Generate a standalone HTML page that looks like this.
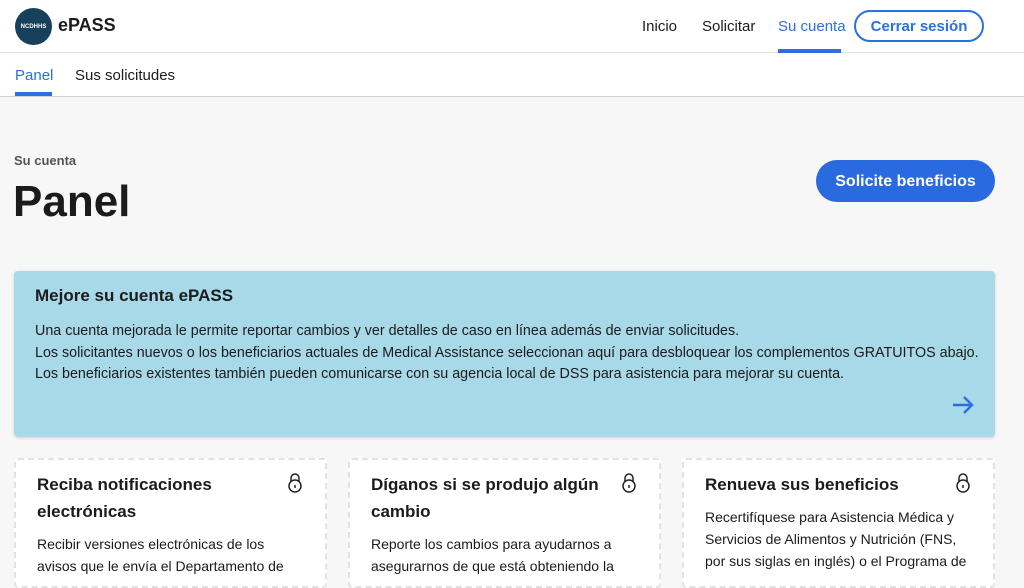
<!DOCTYPE html>
<html><head><meta charset="utf-8"><style>
*{margin:0;padding:0;box-sizing:border-box}
body{width:1024px;height:567px;overflow:hidden;background:#f7f7f7;font-family:"Liberation Sans",sans-serif;color:#1b1b1b;position:relative}
.hdr{position:absolute;left:0;top:0;width:1024px;height:53px;background:#fff;border-bottom:1px solid #dfe1e2}
.logo{position:absolute;left:15px;top:8px;width:37px;height:37px;border-radius:50%;background:#17405a;color:#fff;font-size:6px;font-weight:bold;display:flex;align-items:center;justify-content:center}
.brand{position:absolute;left:58px;top:15px;font-size:18px;font-weight:bold}
.nav{position:absolute;top:18px;font-size:15px;color:#1b1b1b}
.btn{position:absolute;left:854px;top:10px;width:130px;height:32px;border:2px solid #2b6fe0;border-radius:16px;color:#2b6fe0;font-weight:bold;font-size:15px;text-align:center;line-height:29px}
.sub{position:absolute;left:0;top:53px;width:1024px;height:44px;background:#fff;border-bottom:1px solid #cfd2d4}
.tab{position:absolute;top:14px;font-size:15px}
.b2{position:absolute;left:816px;top:160px;width:179px;height:42px;border-radius:21px;background:#2a6ae0;color:#fff;font-weight:bold;font-size:16px;text-align:center;line-height:44px}
.ban{position:absolute;left:14px;top:271px;width:981px;height:166px;background:#a8d9e8;border-radius:4px;box-shadow:0 1px 3px rgba(0,0,0,.15);padding:15px 21px}
.ban h2{font-size:17px;font-weight:bold;margin-bottom:15px}
.ban p{font-size:14.3px;line-height:21.5px;white-space:nowrap}
.card{position:absolute;top:458px;width:313px;height:130px;background:#fff;border:2px dashed #dfe3e5;border-radius:4px;padding:11px 21px}
.card h3{font-size:17px;line-height:27px;font-weight:bold;width:250px}
.card p{font-size:14px;line-height:22px;margin-top:8px}
.lock{position:absolute;right:22px;top:12px}
</style></head><body>
<div class="hdr">
<div class="logo">NCDHHS</div><div class="brand">ePASS</div>
<div class="nav" style="left:642px">Inicio</div>
<div class="nav" style="left:702px">Solicitar</div>
<div class="nav" style="left:778px;color:#2b6fe0">Su cuenta</div>
<div style="position:absolute;left:778px;top:49px;width:63px;height:4px;background:#2b6fe0"></div>
<div class="btn">Cerrar sesión</div>
</div>
<div class="sub">
<div class="tab" style="left:15px;color:#2b6fe0">Panel</div>
<div style="position:absolute;left:15px;top:39px;width:37px;height:4px;background:#2b6fe0"></div>
<div class="tab" style="left:75px">Sus solicitudes</div>
</div>
<div style="position:absolute;left:14px;top:153px;font-size:13px;font-weight:bold;color:#555">Su cuenta</div>
<div style="position:absolute;left:13px;top:177px;font-size:44px;font-weight:bold">Panel</div>
<div class="b2">Solicite beneficios</div>
<div class="ban"><h2>Mejore su cuenta ePASS</h2>
<p>Una cuenta mejorada le permite reportar cambios y ver detalles de caso en línea además de enviar solicitudes.<br>Los solicitantes nuevos o los beneficiarios actuales de Medical Assistance seleccionan aquí para desbloquear los complementos GRATUITOS abajo.<br>Los beneficiarios existentes también pueden comunicarse con su agencia local de DSS para asistencia para mejorar su cuenta.</p>
<svg style="position:absolute;left:937px;top:124px" width="24" height="20" viewBox="0 0 24 20"><path d="M2 10H21M13 2L21 10L13 18" fill="none" stroke="#2b6fe0" stroke-width="2.4"/></svg>
</div>
<div class="card" style="left:14px"><h3>Reciba notificaciones electrónicas</h3><p>Recibir versiones electrónicas de los avisos que le envía el Departamento de</p>
<svg class="lock" width="16" height="22" viewBox="0 0 16 22"><path d="M4 10V6a4 4 0 0 1 8 0v4" fill="none" stroke="#222" stroke-width="1.5"/><circle cx="8" cy="14" r="6" fill="none" stroke="#222" stroke-width="1.5"/><path d="M8 13v3" stroke="#222" stroke-width="1.5"/></svg></div>
<div class="card" style="left:348px"><h3>Díganos si se produjo algún cambio</h3><p>Reporte los cambios para ayudarnos a asegurarnos de que está obteniendo la</p>
<svg class="lock" width="16" height="22" viewBox="0 0 16 22"><path d="M4 10V6a4 4 0 0 1 8 0v4" fill="none" stroke="#222" stroke-width="1.5"/><circle cx="8" cy="14" r="6" fill="none" stroke="#222" stroke-width="1.5"/><path d="M8 13v3" stroke="#222" stroke-width="1.5"/></svg></div>
<div class="card" style="left:682px"><h3>Renueva sus beneficios</h3><p>Recertifíquese para Asistencia Médica y Servicios de Alimentos y Nutrición (FNS, por sus siglas en inglés) o el Programa de</p>
<svg class="lock" width="16" height="22" viewBox="0 0 16 22"><path d="M4 10V6a4 4 0 0 1 8 0v4" fill="none" stroke="#222" stroke-width="1.5"/><circle cx="8" cy="14" r="6" fill="none" stroke="#222" stroke-width="1.5"/><path d="M8 13v3" stroke="#222" stroke-width="1.5"/></svg></div>
</body></html>
